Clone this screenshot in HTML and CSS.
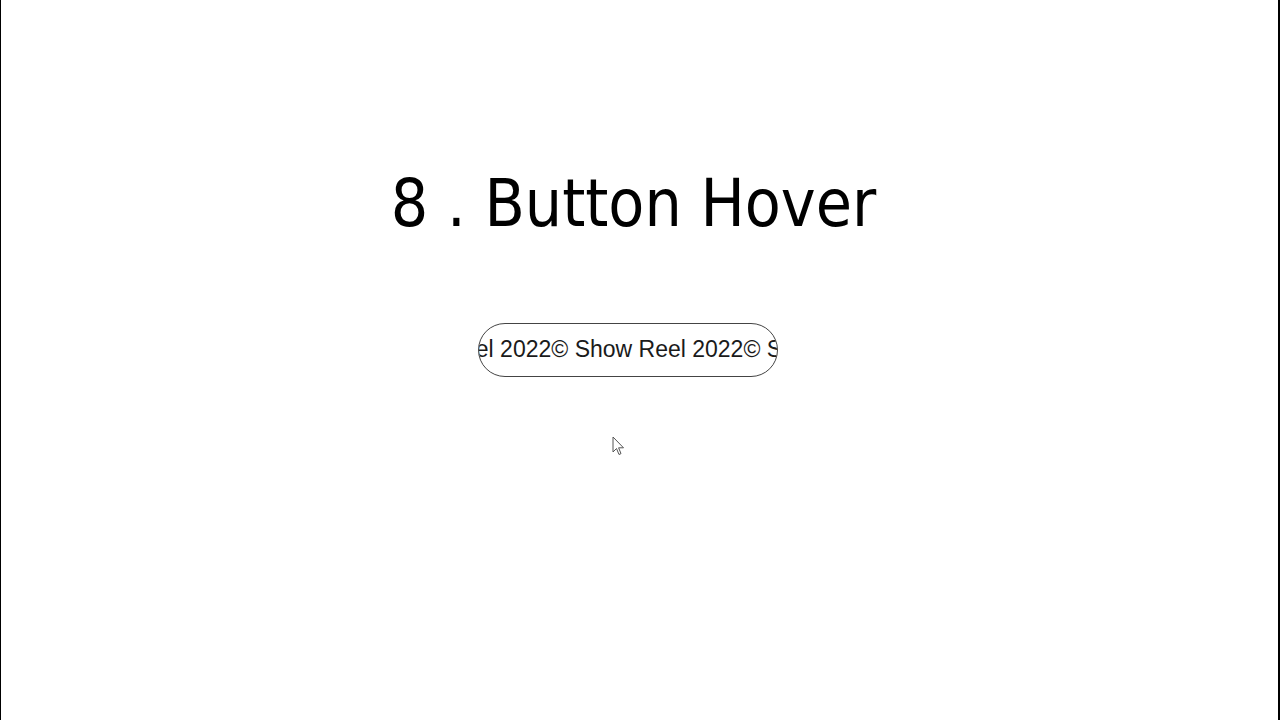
FILE: index.html
```html
<!DOCTYPE html>
<html lang="en">
<head>
    <meta charset="UTF-8">
    <meta name="viewport" content="width=device-width, initial-scale=1.0">
    <title>Button Hover</title>
<link rel="stylesheet" href="styles.css">
</head>
<body>
    <div class="wrap">
        <h1 class="title">8 . Button Hover</h1>
        <a class="btn" href="#">
            <span class="track">
                <span class="item">Show Reel 2022©&nbsp;</span>
                <span class="item">Show Reel 2022©&nbsp;</span>
                <span class="item">Show Reel 2022©&nbsp;</span>
                <span class="item">Show Reel 2022©&nbsp;</span>
            </span>
        </a>
        <!-- 鼠标指针 -->
        <svg class="cursor" width="14" height="22" viewBox="0 0 14 22">
            <path d="M1 1 L1 16 L4.5 12.5 L7 18.5 L9 17.6 L6.6 11.8 L11.5 11.8 Z" fill="#fff" stroke="#555" stroke-width="1" stroke-linejoin="round"/>
        </svg>
    </div>
</body>
</html>
```

FILE: styles.css
```css
*{
    box-sizing: border-box;
}
body{
    margin: 0;
    background: #fff;
}
.wrap{
    position: relative;
    height: 100vh;
    border-left: 1px solid #000;
    border-right: 2px solid #000;
    display: flex;
    flex-direction: column;
    align-items: center;
    padding-top: 171px;
}
.title{
    margin: 0 12px 0 0;
    font-family: "DejaVu Sans Condensed", "DejaVu Sans", sans-serif;
    font-weight: normal;
    font-size: 65.5px;
    line-height: 1;
    color: #000;
}
.btn{
    display: block;
    margin: 86.5px 24px 0 0;
    width: 300px;
    height: 54px;
    border: 1px solid #444;
    border-radius: 27px;
    overflow: hidden;
    text-decoration: none;
    color: #1a1a1a;
}
.track{
    display: flex;
    white-space: nowrap;
    transform: translateX(-96px);
}
.item{
    font-family: "Liberation Sans", Arial, sans-serif;
    font-size: 23px;
    line-height: 51px;
}
.cursor{
    position: absolute;
    left: 611px;
    top: 436px;
}
```
